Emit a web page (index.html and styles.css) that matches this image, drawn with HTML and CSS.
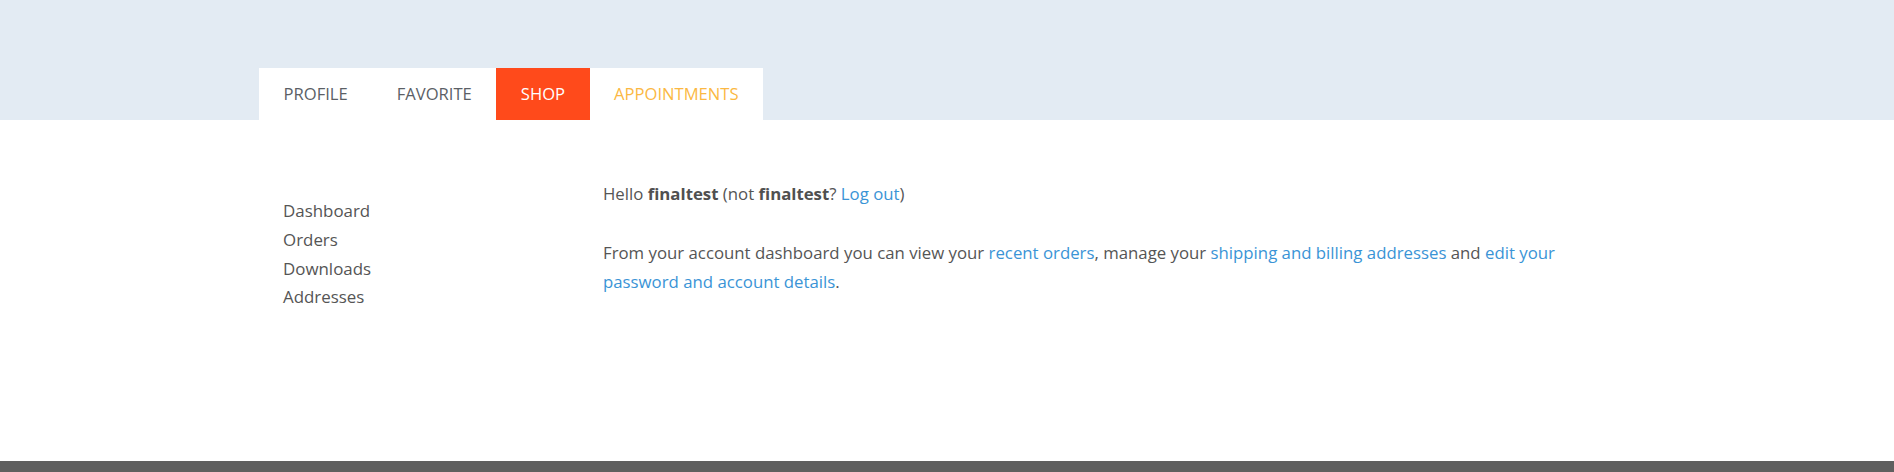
FILE: index.html
```html
<!DOCTYPE html>
<html lang="en">
<head>
<meta charset="utf-8">
<title>My account</title>
<link rel="stylesheet" href="styles.css">
</head>
<body>
<header class="top">
  <div class="container">
    <nav class="tabs">
      <a class="tab" href="#">Profile</a>
      <a class="tab" href="#">Favorite</a>
      <a class="tab tab-active" href="#">Shop</a>
      <a class="tab tab-appt" href="#">Appointments</a>
    </nav>
  </div>
</header>
<main class="content">
  <div class="container account">
    <ul class="side-nav">
      <li><a href="#">Dashboard</a></li>
      <li><a href="#">Orders</a></li>
      <li><a href="#">Downloads</a></li>
      <li><a href="#">Addresses</a></li>
    </ul>
    <div class="account-main">
      <p>Hello <strong>finaltest</strong> (not <strong>finaltest</strong>? <a class="link" href="#">Log out</a>)</p>
      <p>From your account dashboard you can view your <a class="link" href="#">recent orders</a>, manage your <a class="link" href="#">shipping and billing addresses</a> and <a class="link" href="#">edit your password and account details</a>.</p>
    </div>
  </div>
</main>
<footer class="footer"></footer>
</body>
</html>
```
FILE: styles.css
```css
html, body {
  margin: 0;
  padding: 0;
}
body {
  font-family: "Open Sans", "Liberation Sans", sans-serif;
  color: #555555;
  background: #ffffff;
  overflow: hidden;
}
.container {
  width: 1376px;
  margin: 0 auto;
}
.top {
  background: #e3ebf3;
  height: 120px;
  display: flex;
  align-items: flex-end;
}
.tabs {
  display: flex;
  background: #ffffff;
  width: fit-content;
}
.tab {
  display: block;
  padding: 0 24.5px;
  line-height: 52px;
  font-size: 16.6px;
  text-transform: uppercase;
  text-decoration: none;
  color: #5b5f66;
}
.tab-active {
  background: #ff4a1b;
  color: #ffffff;
}
.tab-appt {
  color: #fbb843;
}
.content {
  min-height: 341px;
}
.account {
  display: grid;
  grid-template-columns: 25% 75%;
  padding-top: 60px;
  font-size: 16.8px;
  line-height: 28.8px;
}
.side-nav {
  list-style: none;
  margin: 0;
  padding: 17px 0 0 24px;
  font-size: 16.9px;
}
.side-nav a {
  color: #555555;
  text-decoration: none;
}
.account-main p {
  margin: 0 0 30px;
}
.account-main strong {
  font-weight: 700;
  color: #505050;
}
.link {
  color: #3a94d6;
  text-decoration: none;
}
.footer {
  background: #5f5f5f;
  height: 80px;
}
```
